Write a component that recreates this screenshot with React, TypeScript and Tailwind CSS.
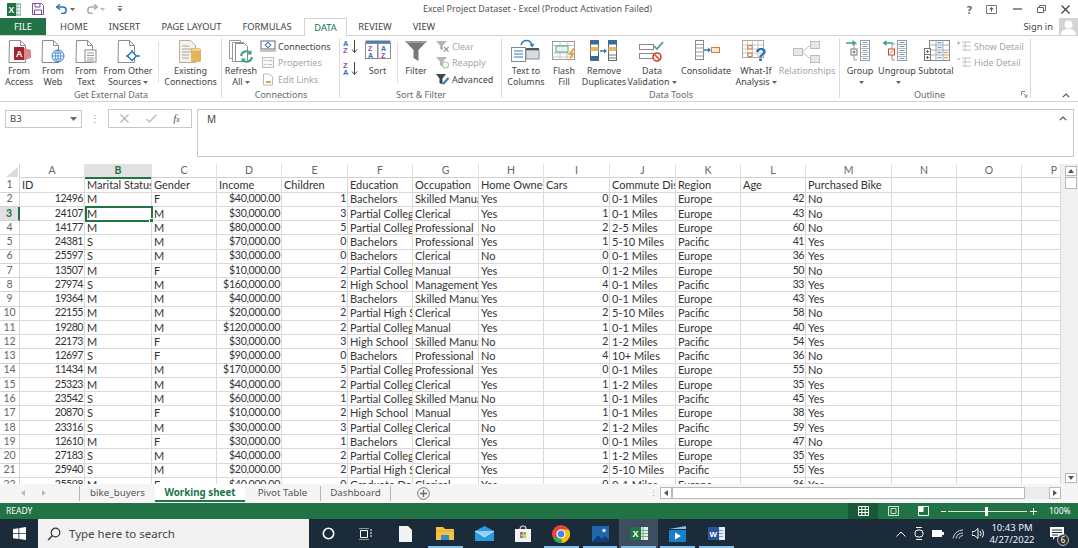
import React from "react";

const UI = "font-['Noto_Sans','Open_Sans',sans-serif]";

const rows: string[][] = [
  ["12496","M","F","$40,000.00","1","Bachelors","Skilled Manual","Yes","0","0-1 Miles","Europe","42","No"],
  ["24107","M","M","$30,000.00","3","Partial College","Clerical","Yes","1","0-1 Miles","Europe","43","No"],
  ["14177","M","M","$80,000.00","5","Partial College","Professional","No","2","2-5 Miles","Europe","60","No"],
  ["24381","S","M","$70,000.00","0","Bachelors","Professional","Yes","1","5-10 Miles","Pacific","41","Yes"],
  ["25597","S","M","$30,000.00","0","Bachelors","Clerical","No","0","0-1 Miles","Europe","36","Yes"],
  ["13507","M","F","$10,000.00","2","Partial College","Manual","Yes","0","1-2 Miles","Europe","50","No"],
  ["27974","S","M","$160,000.00","2","High School","Management","Yes","4","0-1 Miles","Pacific","33","Yes"],
  ["19364","M","M","$40,000.00","1","Bachelors","Skilled Manual","Yes","0","0-1 Miles","Europe","43","Yes"],
  ["22155","M","M","$20,000.00","2","Partial High School","Clerical","Yes","2","5-10 Miles","Pacific","58","No"],
  ["19280","M","M","$120,000.00","2","Partial College","Manual","Yes","1","0-1 Miles","Europe","40","Yes"],
  ["22173","M","F","$30,000.00","3","High School","Skilled Manual","No","2","1-2 Miles","Pacific","54","Yes"],
  ["12697","S","F","$90,000.00","0","Bachelors","Professional","No","4","10+ Miles","Pacific","36","No"],
  ["11434","M","M","$170,000.00","5","Partial College","Professional","Yes","0","0-1 Miles","Europe","55","No"],
  ["25323","M","M","$40,000.00","2","Partial College","Clerical","Yes","1","1-2 Miles","Europe","35","Yes"],
  ["23542","S","M","$60,000.00","1","Partial College","Skilled Manual","No","1","0-1 Miles","Pacific","45","Yes"],
  ["20870","S","F","$10,000.00","2","High School","Manual","Yes","1","0-1 Miles","Europe","38","Yes"],
  ["23316","S","M","$30,000.00","3","Partial College","Clerical","No","2","1-2 Miles","Pacific","59","Yes"],
  ["12610","M","F","$30,000.00","1","Bachelors","Clerical","Yes","0","0-1 Miles","Europe","47","No"],
  ["27183","S","M","$40,000.00","2","Partial College","Clerical","Yes","1","1-2 Miles","Europe","35","Yes"],
  ["25940","S","M","$20,000.00","2","Partial High School","Clerical","Yes","2","5-10 Miles","Pacific","55","Yes"],
  ["25598","M","F","$40,000.00","0","Graduate Degree","Clerical","Yes","0","0-1 Miles","Europe","36","Yes"],
];
const header = ["ID","Marital Status","Gender","Income","Children","Education","Occupation","Home Owner","Cars","Commute Distance","Region","Age","Purchased Bike"];
const cols = "ABCDEFGHIJKLMNOP".split("");
const rightCols = new Set([0,3,4,8,11]);
const GRID = "grid grid-cols-[20px_65px_67px_65px_65px_66px_65px_66px_65px_66px_66px_65px_65px_86px_65px_65px_39px]";

const Caret = ({ c = "#666" }: { c?: string }) => (
  <svg width="5" height="3" viewBox="0 0 5 3" className="inline-block ml-[2px] align-middle"><path d="M0 0h5L2.500 3z" fill={c} /></svg>
);

const Doc = ({ x = 0, c = "#8c8c8c" }: { x?: number; c?: string }) => (
  <path transform={`translate(${x} 0)`} d="M0.500 1.500h11l5 5v17h-16.500z M11.500 1.500v5h5" fill="#fff" stroke={c} />
);

const Icons: Record<string, React.ReactNode> = {
  access: (<svg width="30" height="25" viewBox="0 0 30 25"><Doc x={5} /><rect x="10" y="8" width="10" height="13" fill="#a4262c" /><path d="M20 9l7 2v8l-7 2z" fill="#d98a8c" /><text x="12" y="18" fontSize="9" fontWeight="700" fill="#fff" fontFamily="Liberation Sans">A</text></svg>),
  web: (<svg width="30" height="25" viewBox="0 0 30 25"><Doc x={4} /><circle cx="20" cy="17" r="6" fill="#fff" stroke="#3b7fc4" /><path d="M14 17h12M20 11v12M15.500 14h9M15.500 20h9" stroke="#3b7fc4" strokeWidth=".8" /><ellipse cx="20" cy="17" rx="2.800" ry="6" fill="none" stroke="#3b7fc4" strokeWidth=".8" /></svg>),
  text: (<svg width="30" height="25" viewBox="0 0 30 25"><Doc x={5} /><rect x="14" y="11" width="11" height="12" fill="#fff" stroke="#8c8c8c" /><path d="M16 14h7M16 16.500h7M16 19h7M16 21h7" stroke="#9a9a9a" /></svg>),
  other: (<svg width="30" height="25" viewBox="0 0 30 25"><Doc x={5} /><path d="M19 11v11M13 17h4M21 17h6" stroke="#2b79c2" strokeWidth="1.300" /><rect x="15.800" y="13.800" width="6.400" height="6.400" transform="rotate(45 19 17)" fill="#fff" stroke="#2b79c2" strokeWidth="1.500" /></svg>),
  existing: (<svg width="30" height="25" viewBox="0 0 30 25"><path d="M3.500 1.500h11l5 5v17h-16z" fill="#f6f2ea" stroke="#b5ad9d" /><path d="M6 7h7M6 10h11M6 13h11M6 16h7M6 19h7" stroke="#a8a8a8" /><rect x="15" y="11" width="10" height="12" rx="1.500" fill="#e3b45c" /><ellipse cx="20" cy="11" rx="5" ry="1.800" fill="#f0d28f" stroke="#c99a42" strokeWidth=".5" /></svg>),
  refresh: (<svg width="30" height="25" viewBox="0 0 30 25"><path d="M3.500 1.500h11v18h-11z" fill="#fff" stroke="#999" /><path d="M6.500 3.500h11v19h-11z" fill="#fff" stroke="#999" /><path d="M9.500 4.500h9l3 3v15h-12z" fill="#fff" stroke="#8c8c8c" /><path d="M15 17a5.500 5.500 0 0 1 9.500-3M26 18a5.500 5.500 0 0 1-9.500 3" fill="none" stroke="#3fa27a" strokeWidth="2" /><path d="M25.500 11v4.500h-4.500zM15.500 24v-4.500h4.500z" fill="#3fa27a" /></svg>),
  conn: (<svg width="16" height="13" viewBox="0 0 16 13"><rect x="1" y="1" width="14" height="8" fill="#fff" stroke="#666" /><rect x="6" y="3" width="4" height="4" transform="rotate(45 8 5)" fill="#fff" stroke="#2b79c2" /><path d="M0 11h16" stroke="#888" /></svg>),
  prop: (<svg width="14" height="13" viewBox="0 0 14 13"><rect x="1.500" y="1.500" width="11" height="10" fill="#f7f7f7" stroke="#bbb" /><path d="M3.500 4.500h2M7 4.500h4M3.500 8.500h2M7 8.500h4" stroke="#bbb" /></svg>),
  links: (<svg width="14" height="13" viewBox="0 0 14 13"><path d="M2.500 1h6l3 3v8h-9z" fill="#fff" stroke="#bbb" /><path d="M5 9h5" stroke="#d9a85f" strokeWidth="2" /></svg>),
  sortaz: (<svg width="16" height="15" viewBox="0 0 16 15"><text x="0" y="7" fontSize="7.500" fontWeight="700" fill="#2c73b8" fontFamily="Liberation Sans">A</text><text x="0" y="14" fontSize="7.500" fontWeight="700" fill="#8d4fb0" fontFamily="Liberation Sans">Z</text><path d="M11.500 1v12M9 10.500l2.500 3 2.500-3" stroke="#444" fill="none" /></svg>),
  sortza: (<svg width="16" height="15" viewBox="0 0 16 15"><text x="0" y="7" fontSize="7.500" fontWeight="700" fill="#8d4fb0" fontFamily="Liberation Sans">Z</text><text x="0" y="14" fontSize="7.500" fontWeight="700" fill="#2c73b8" fontFamily="Liberation Sans">A</text><path d="M11.500 1v12M9 10.500l2.500 3 2.500-3" stroke="#444" fill="none" /></svg>),
  sort: (<svg width="26" height="22" viewBox="0 0 26 22"><rect x=".5" y=".5" width="25" height="3" fill="#4f7fb5" /><rect x=".5" y="3.500" width="12" height="15" fill="#fff" stroke="#8a8a8a" /><rect x="13" y="3.500" width="12.500" height="15" fill="#fff" stroke="#8a8a8a" /><text x="3" y="11" fontSize="7" fontWeight="700" fill="#8d4fb0" fontFamily="Liberation Sans">Z</text><text x="3" y="18" fontSize="7" fontWeight="700" fill="#2c73b8" fontFamily="Liberation Sans">A</text><text x="16" y="11" fontSize="7" fontWeight="700" fill="#2c73b8" fontFamily="Liberation Sans">A</text><text x="16" y="18" fontSize="7" fontWeight="700" fill="#8d4fb0" fontFamily="Liberation Sans">Z</text></svg>),
  filter: (<svg width="24" height="22" viewBox="0 0 24 22"><path d="M1 1h22l-8.500 9v11l-5-3v-8z" fill="#777" /><path d="M1 1h22l-2 2H3z" fill="#9a9a9a" /></svg>),
  clear: (<svg width="15" height="13" viewBox="0 0 15 13"><path d="M1 1h11l-4 4.500v5l-3-1.500V5.500z" fill="#b5b5b5" /><path d="M9 7l4.500 4.500M13.500 7L9 11.500" stroke="#9a9a9a" strokeWidth="1.200" /></svg>),
  reapply: (<svg width="15" height="13" viewBox="0 0 15 13"><path d="M1 1h11l-4 4.500v5l-3-1.500V5.500z" fill="#b5b5b5" /><circle cx="10.500" cy="9" r="3" fill="none" stroke="#9cc7b3" strokeWidth="1.100" /></svg>),
  advanced: (<svg width="15" height="13" viewBox="0 0 15 13"><path d="M1 1h10l-3.500 4.500v6l-3-1.500V5.500z" fill="#444" /><path d="M8 11l5.500-6" stroke="#2b79c2" strokeWidth="2" /></svg>),
  t2c: (<svg width="30" height="25" viewBox="0 0 30 25"><path d="M10 6c2-6 9-6 11 0" fill="none" stroke="#2b79c2" strokeWidth="1.500" /><path d="M18.500 5.500l3 3 2-4z" fill="#2b79c2" /><rect x=".5" y="8.500" width="14" height="14" fill="#fff" stroke="#8a8a8a" /><path d="M3 12h9M3 15h9M3 18h9" stroke="#2b79c2" /><rect x="15" y="11" width="13" height="9" fill="#d5dce4" stroke="#8a8a8a" /><path d="M15 10h13" stroke="#555" strokeWidth="2" /></svg>),
  flash: (<svg width="30" height="25" viewBox="0 0 30 25"><rect x="3.500" y="2.500" width="22" height="18" fill="#fff" stroke="#9a9a9a" /><path d="M3.500 6.500h22M3.500 14h22M3.500 18h22M11 2.500v18M18 2.500v18" stroke="#c4c4c4" /><rect x="7" y="7" width="12" height="6" fill="#e9f3ec" stroke="#54a67f" /><path d="M24 9l-5 7h3l-3 7 7-9h-3l3-5z" fill="#e9a23b" /></svg>),
  dup: (<svg width="30" height="25" viewBox="0 0 30 25"><rect x="1.500" y="1.500" width="8" height="20" fill="#fff" stroke="#666" /><rect x="1.500" y="1.500" width="8" height="4" fill="#2f6cac" /><rect x="1.500" y="8" width="8" height="4" fill="#e8b85f" /><rect x="1.500" y="17" width="8" height="4" fill="#2f6cac" /><rect x="19.500" y="1.500" width="8" height="20" fill="#fff" stroke="#666" /><rect x="19.500" y="1.500" width="8" height="4" fill="#2f6cac" /><rect x="19.500" y="8" width="8" height="4" fill="#e8b85f" /><path d="M19.500 16h8M19.500 19h8" stroke="#777" /><path d="M11 12h5" stroke="#2b79c2" strokeWidth="1.500" /><path d="M15 9.500l3 2.500-3 2.500z" fill="#2b79c2" /></svg>),
  dv: (<svg width="30" height="25" viewBox="0 0 30 25"><rect x="2.500" y="5.500" width="14" height="5" fill="#fff" stroke="#8a8a8a" /><rect x="2.500" y="14.500" width="14" height="5" fill="#fff" stroke="#8a8a8a" /><path d="M17 7l3 3 6-7" fill="none" stroke="#3fa27a" strokeWidth="1.700" /><circle cx="20" cy="18" r="4" fill="#fff" stroke="#d24726" strokeWidth="1.600" /><path d="M17.500 15.500l5 5" stroke="#d24726" strokeWidth="1.500" /></svg>),
  cons: (<svg width="30" height="25" viewBox="0 0 30 25"><rect x="4.500" y="1.500" width="8" height="19" fill="#fff" stroke="#8a8a8a" /><path d="M4.500 5.500h8M4.500 9h8M4.500 13h8M4.500 17h8" stroke="#9a9a9a" /><path d="M13 11h5" stroke="#2b79c2" strokeWidth="1.500" /><path d="M17 8.500l3 2.500-3 2.500z" fill="#2b79c2" /><rect x="20.500" y="8.500" width="8" height="5" fill="#fbe5d6" stroke="#e0783c" /></svg>),
  whatif: (<svg width="30" height="25" viewBox="0 0 30 25"><rect x="1.500" y="1.500" width="21" height="17" fill="#fff" stroke="#a8a8a8" /><path d="M1.500 6h21M1.500 10h21M1.500 14h21M6.500 1.500v17M11.500 1.500v17M17 1.500v17" stroke="#c8c8c8" /><rect x="7" y="6.500" width="4" height="3.500" fill="none" stroke="#e0783c" /><rect x="7" y="14" width="4" height="3.500" fill="none" stroke="#e0783c" /><text x="14" y="22" fontSize="19" fontWeight="700" fill="#2b6fb5" fontFamily="Liberation Sans">?</text></svg>),
  rel: (<svg width="30" height="25" viewBox="0 0 30 25"><rect x="1.500" y="9.500" width="9" height="7" fill="#e8e8e8" stroke="#bdbdbd" /><rect x="18.500" y="2.500" width="9" height="7" fill="#e8e8e8" stroke="#bdbdbd" /><rect x="18.500" y="16.500" width="9" height="7" fill="#e8e8e8" stroke="#bdbdbd" /><path d="M10.500 13l8-7M10.500 13l8 7" stroke="#bdbdbd" /></svg>),
  group: (<svg width="30" height="25" viewBox="0 0 30 25"><path d="M1 4h8" stroke="#3fa27a" strokeWidth="1.500" /><path d="M7.500 1l4 3-4 3z" fill="#3fa27a" /><path d="M12 5h-3v16h3" fill="none" stroke="#999" /><rect x="6" y="10" width="6" height="6" fill="#fff" stroke="#777" /><path d="M7.500 13h3M9 11.500v3" stroke="#666" /><rect x="15.500" y="1.500" width="9" height="20" fill="#fff" stroke="#999" /><path d="M15.500 5.500h9M15.500 9.500h9M15.500 13.500h9M15.500 17.500h9" stroke="#b5b5b5" /><path d="M17.500 3.500h5M17.500 7.500h5M17.500 11.500h5M17.500 15.500h5M17.500 19.500h5" stroke="#6aa0d3" strokeWidth="1.200" /></svg>),
  ungroup: (<svg width="30" height="25" viewBox="0 0 30 25"><path d="M3 4h8" stroke="#3fa27a" strokeWidth="1.500" /><path d="M4.500 1l-4 3 4 3z" fill="#3fa27a" /><path d="M13 5h-3v16h3" fill="none" stroke="#999" /><rect x="6.500" y="10" width="6" height="6" fill="#fff" stroke="#d24726" /><path d="M8 14.500l3-3" stroke="#d24726" /><rect x="15.500" y="1.500" width="9" height="20" fill="#fff" stroke="#999" /><path d="M15.500 5.500h9M15.500 9.500h9M15.500 13.500h9M15.500 17.500h9" stroke="#b5b5b5" /><path d="M17.500 3.500h5M17.500 7.500h5M17.500 11.500h5M17.500 15.500h5M17.500 19.500h5" stroke="#6aa0d3" strokeWidth="1.200" /></svg>),
  subtotal: (<svg width="30" height="25" viewBox="0 0 30 25"><rect x="8.500" y="1.500" width="20" height="20" fill="#fff" stroke="#888" /><path d="M8.500 6h20M8.500 11h20M8.500 16h20M15 1.500v20M22 1.500v20" stroke="#aaa" /><path d="M16.500 3.700h4M16.500 8.500h4M16.500 13.500h4M16.500 18.700h4" stroke="#6aa0d3" strokeWidth="1.300" /><path d="M23 13.500h4M23 18.700h4" stroke="#e8a45c" strokeWidth="1.300" /><rect x="3.500" y="9.500" width="6" height="6" fill="#fff" stroke="#777" /><path d="M5 12.500h3M6.500 11v3" stroke="#666" /><rect x="3.500" y="15.500" width="6" height="6" fill="#fff" stroke="#777" /><path d="M5 18.500h3M6.500 17v3" stroke="#666" /></svg>),
  show: (<svg width="16" height="13" viewBox="0 0 16 13"><path d="M1 3h3M2.500 1.500v3" stroke="#aaa" /><path d="M6 2h9M6 6h9M6 10h9M9 2v9" stroke="#c2c2c2" /></svg>),
  hide: (<svg width="16" height="13" viewBox="0 0 16 13"><path d="M1 3h3" stroke="#aaa" /><path d="M6 2h9M6 6h9M6 10h9M9 2v9" stroke="#c2c2c2" /></svg>),
};

function Big({ w, icon, l1, l2, caret, caretOnly, dim }: { w: string; icon: string; l1: string; l2?: string; caret?: boolean; caretOnly?: boolean; dim?: boolean }) {
  return (
    <div className={`${w} flex flex-col items-center shrink-0 ${dim ? "text-[#a6a6a6]" : "text-[#444]"}`}>
      <div className="h-[27px] flex items-center justify-center pt-[1px]">{Icons[icon]}</div>
      <div className="h-[11px] leading-[11px] whitespace-nowrap mt-[1px]">{l1}</div>
      <div className="h-[11px] leading-[11px] whitespace-nowrap">
        {l2}{caret && <Caret />}{caretOnly && <Caret />}
      </div>
    </div>
  );
}

function Small({ icon, label, dim }: { icon: string; label: string; dim?: boolean }) {
  return (
    <div className={`h-[16.500px] flex items-center gap-[2px] whitespace-nowrap ${dim ? "text-[#a6a6a6]" : "text-[#444]"}`}>
      <span className="w-[16px] flex justify-center">{Icons[icon]}</span>
      <span>{label}</span>
    </div>
  );
}

function Group({ w, label, children, launcher, pr }: { w: string; label: string; children: React.ReactNode; launcher?: boolean; pr?: string }) {
  return (
    <div className={`${w} shrink-0 flex flex-col relative`}>
      <div className="h-[53px] flex pt-[1px]">{children}</div>
      <div className={`h-[11px] leading-[11px] text-center text-[#6a6a6a] ${pr ?? ""}`}>{label}</div>
      <div className="absolute right-0 top-[2px] bottom-[3px] w-px bg-[#dcdcdc]" />
      {launcher && (
        <svg className="absolute right-[3px] bottom-[3px]" width="7" height="7" viewBox="0 0 7 7"><path d="M.5 .5h4M.5 .5v4" stroke="#888" /><path d="M2.500 2.500l3.500 3.500M6 3.500V6H3.500" stroke="#888" fill="none" /></svg>
      )}
    </div>
  );
}

const VSep = () => <div className="w-px h-[41px] mt-[5px] bg-[#dfdfdf] shrink-0" />;

function Tab({ w, label }: { w: string; label: string }) {
  return <div className={`${w} h-[17px] leading-[17px] text-center text-[#444] shrink-0`}>{label}</div>;
}

const Chevron = () => (
  <svg width="8" height="5" viewBox="0 0 8 5"><path d="M.8 4.200L4 1l3.200 3.200" fill="none" stroke="#555" strokeWidth="1.200" /></svg>
);

function Sheet() {
  return (
    <div className="flex-1 overflow-hidden font-['Lato','Liberation_Sans',sans-serif] text-[11px] text-[#333] relative">
      <div className={`${GRID} h-[14px] text-[#666] text-[10.500px] border-b border-[#d0d0d0]`}>
        <div className="relative bg-white border-r border-[#d4d4d4]">
          <svg className="absolute right-[1px] bottom-[1px]" width="12" height="10" viewBox="0 0 12 10"><path d="M12 0v10H0z" fill="#dcdcdc" /></svg>
        </div>
        {cols.map((c, i) => (
          <div key={c} className={`leading-[13px] border-r border-[#e2e2e2] ${i === 15 ? "text-right pr-[3px]" : "text-center"} ${c === "B" ? "bg-[#e1e1e1] text-[#217346] font-bold border-b-2 border-b-[#217346] -mb-[1px]" : ""}`}>{c}</div>
        ))}
      </div>
      {[header, ...rows].map((r, ri) => (
        <div key={ri} className={`${GRID} h-[14.275px]`}>
          <div className={`text-center text-[10.500px] leading-[13.500px] border-r border-b border-[#d4d4d4] text-[#666] ${ri === 2 ? "bg-[#e1e1e1] text-[#217346] font-bold border-r-2 border-r-[#217346]" : ""}`}>{ri + 1}</div>
          {Array.from({ length: 16 }).map((_, ci) => {
            const v = r[ci] ?? "";
            const right = ri > 0 && rightCols.has(ci);
            const money = right && ci === 3;
            return (
              <div key={ci} className={`relative overflow-hidden whitespace-nowrap leading-[13.500px] border-r border-b border-[#d9d9d9] ${right ? "text-right pr-[1px] text-[10.600px]" : "pl-[2px]"} ${right ? (money ? "tracking-[-0.3px]" : "tracking-[-0.5px]") : ""}`}>{v}</div>
            );
          })}
        </div>
      ))}
      <div className="absolute left-[85px] top-[42px] w-[67.500px] h-[15.500px] border-2 border-[#217346]">
        <div className="absolute -right-[3px] -bottom-[3px] w-[5px] h-[5px] bg-[#217346] border border-white" />
      </div>
    </div>
  );
}

function VScroll() {
  return (
    <div className="w-[17px] bg-[#f0f0f0] flex flex-col items-center pt-[2px] pl-[2px]">
      <div className="w-[12px] h-[10px] bg-white border border-[#b8b8b8] flex items-center justify-center">
        <svg width="6" height="4" viewBox="0 0 6 4"><path d="M0 4h6L3 0z" fill="#555" /></svg>
      </div>
      <div className="w-[12px] h-[12px] bg-white border border-[#b8b8b8] mt-[1px]" />
      <div className="flex-1" />
      <div className="w-[12px] h-[10px] bg-white border border-[#b8b8b8] flex items-center justify-center mb-[1px]">
        <svg width="6" height="4" viewBox="0 0 6 4"><path d="M0 0h6L3 4z" fill="#555" /></svg>
      </div>
    </div>
  );
}

function SheetTabs() {
  const Sep = () => <div className="w-px h-[15px] bg-[#b5b5b5] shrink-0" />;
  return (
    <div className={`${UI} h-[19px] bg-[#f5f5f5] flex items-center pb-[1px] text-[9.800px] text-[#555] shrink-0`}>
      <div className="w-[79px] flex items-center pl-[21px] gap-[17px] shrink-0">
        <svg width="4" height="6" viewBox="0 0 4 6"><path d="M4 0v6L0 3z" fill="#bbb" /></svg>
        <svg width="4" height="6" viewBox="0 0 4 6"><path d="M0 0v6l4-3z" fill="#bbb" /></svg>
      </div>
      <Sep />
      <div className="w-[75px] text-center shrink-0">bike_buyers</div>
      <div className="w-[90px] h-[18px] leading-[17px] self-start text-center font-bold text-[#217346] bg-white border-b-2 border-[#217346] shrink-0">Working sheet</div>
      <div className="w-[75px] text-center shrink-0">Pivot Table</div>
      <Sep />
      <div className="w-[69px] text-center shrink-0">Dashboard</div>
      <Sep />
      <div className="w-[65px] flex justify-center shrink-0">
        <svg width="13" height="13" viewBox="0 0 13 13"><circle cx="6.500" cy="6.500" r="5.800" fill="none" stroke="#777" /><path d="M6.500 3v7M3 6.500h7" stroke="#666" strokeWidth="1.300" /></svg>
      </div>
      <div className="w-[191px] shrink-0" />
      <div className="w-[13px] text-center text-[#999] leading-[8px] shrink-0 text-[7px]">⋮</div>
      <div className="w-[12px] h-[12px] bg-white border border-[#b8b8b8] flex items-center justify-center shrink-0">
        <svg width="4" height="6" viewBox="0 0 4 6"><path d="M4 0v6L0 3z" fill="#555" /></svg>
      </div>
      <div className="w-[353px] h-[12px] bg-white border border-[#b8b8b8] shrink-0" />
      <div className="w-[24px] h-[12px] bg-[#ececec] shrink-0" />
      <div className="w-[12px] h-[12px] bg-white border border-[#b8b8b8] flex items-center justify-center shrink-0">
        <svg width="4" height="6" viewBox="0 0 4 6"><path d="M0 0v6l4-3z" fill="#555" /></svg>
      </div>
    </div>
  );
}

function StatusBar() {
  return (
    <div className={`${UI} h-[16px] bg-[#217346] flex items-center text-white text-[8.500px] shrink-0`}>
      <div className="pl-[6px] w-[848px] shrink-0">READY</div>
      <div className="w-[30px] h-[16px] bg-[#175a35] flex items-center justify-center shrink-0">
        <svg width="11" height="10" viewBox="0 0 11 10"><path d="M.5 .5h10v9H.5zM.5 3.500h10M.5 6.500h10M3.800 .5v9M7.200 .5v9" fill="none" stroke="#fff" /></svg>
      </div>
      <div className="w-[30px] flex justify-center shrink-0">
        <svg width="11" height="10" viewBox="0 0 11 10"><path d="M.5 .5h10v9H.5z" fill="none" stroke="#cfe3d8" /><path d="M3 2.500h5v5H3z" fill="none" stroke="#cfe3d8" /></svg>
      </div>
      <div className="w-[30px] flex justify-center shrink-0">
        <svg width="11" height="10" viewBox="0 0 11 10"><path d="M.5 .5h10v9H.5z" fill="none" stroke="#fff" /><path d="M1 1h4.500v5H1z" fill="#fff" /></svg>
      </div>
      <div className="w-[3px] shrink-0" />
      <div className="w-[97px] flex items-center shrink-0 gap-[2px]">
        <div className="w-[5px] h-px bg-white shrink-0" />
        <div className="relative w-[79px] h-px bg-[#d6e6dc] shrink-0">
          <div className="absolute left-[37px] -top-[4px] w-[3px] h-[9px] bg-white" />
        </div>
        <svg width="7" height="7" viewBox="0 0 7 7" className="ml-[1px] shrink-0"><path d="M3.500 0v7M0 3.500h7" stroke="#fff" /></svg>
      </div>
      <div className="text-[8.500px] ml-[11px]">100%</div>
    </div>
  );
}

function TaskIcon({ w = "w-[38.700px]", active, bar, children }: { w?: string; active?: boolean; bar?: boolean; children: React.ReactNode }) {
  return (
    <div className={`${w} h-[29px] relative flex items-center justify-center shrink-0 ${active ? "bg-[#3d4f5f]" : ""}`}>
      {children}
      {bar && <div className="absolute bottom-0 left-[2px] right-[2px] h-[2px] bg-[#7fc2ee]" />}
    </div>
  );
}

function Taskbar() {
  return (
    <div className={`${UI} flex-1 bg-[#1b2b3a] flex items-center text-white`}>
      <div className="w-[38px] flex justify-center shrink-0">
        <svg width="13" height="13" viewBox="0 0 13 13"><path d="M0 2l5.500-.8v5H0zM6.300 1.100L13 0v6.200H6.300zM0 7h5.500v5L0 11.200zM6.300 7H13v6l-6.700-1z" fill="#fff" /></svg>
      </div>
      <div className="w-[271px] h-[29px] bg-[#f2f2f2] flex items-center text-[#444] text-[11.500px] shrink-0">
        <svg className="ml-[9px] mr-[8px]" width="14" height="14" viewBox="0 0 14 14"><circle cx="8.500" cy="5.500" r="4.300" fill="none" stroke="#333" strokeWidth="1.200" /><path d="M5.500 8.500L1 13" stroke="#333" strokeWidth="1.500" /></svg>
        Type here to search
      </div>
      <TaskIcon w="w-[38px]"><svg width="13" height="13" viewBox="0 0 13 13"><circle cx="6.500" cy="6.500" r="5.200" fill="none" stroke="#fff" strokeWidth="1.600" /></svg></TaskIcon>
      <TaskIcon w="w-[37px]"><svg width="13" height="12" viewBox="0 0 13 12"><path d="M1.500 2.500h7v7h-7z" fill="none" stroke="#fff" /><path d="M0 0h10M0 12h10M11 2h2M11 5h2M11 8h2" stroke="#fff" /></svg></TaskIcon>
      <TaskIcon w="w-[42px]"><svg width="13" height="16" viewBox="0 0 13 16"><path d="M0 0h9l4 4v12H0z" fill="#f3f3f3" /></svg></TaskIcon>
      <TaskIcon bar><svg width="18" height="15" viewBox="0 0 18 15"><path d="M0 1h7l2 2h9v11H0z" fill="#f5c242" /><path d="M0 5h18" stroke="#e8a92f" /><rect x="5" y="9" width="8" height="5" fill="#2d8fd5" /></svg></TaskIcon>
      <TaskIcon><svg width="19" height="15" viewBox="0 0 19 15"><path d="M0 5L9.500 0 19 5v10H0z" fill="#2b9be0" /><path d="M0 5l9.500 6L19 5" fill="#8fd2f7" stroke="#fff" strokeWidth=".6" /></svg></TaskIcon>
      <TaskIcon><svg width="16" height="17" viewBox="0 0 16 17"><path d="M5 4a3 3 0 0 1 6 0" fill="none" stroke="#e8e8e8" strokeWidth="1.200" /><rect x="0" y="4" width="16" height="13" fill="#f3f3f3" /><rect x="5" y="7" width="2.800" height="2.800" fill="#e8553b" /><rect x="8.300" y="7" width="2.800" height="2.800" fill="#7fba3a" /><rect x="5" y="10.300" width="2.800" height="2.800" fill="#2b9be0" /><rect x="8.300" y="10.300" width="2.800" height="2.800" fill="#f5b928" /></svg></TaskIcon>
      <TaskIcon bar><svg width="18" height="18" viewBox="0 0 18 18"><circle cx="9" cy="9" r="9" fill="#e8453c" /><path d="M9 9L1.200 13.500A9 9 0 0 0 10 18z" fill="#34a853" /><path d="M9 9v-4.500h7.800A9 9 0 0 1 10 18z" fill="#fbbc05" /><circle cx="9" cy="9" r="4" fill="#4285f4" stroke="#fff" strokeWidth="1.200" /></svg></TaskIcon>
      <TaskIcon bar><svg width="17" height="16" viewBox="0 0 17 16"><rect width="17" height="16" fill="#1f66ad" /><path d="M0 16l6-7 4 4 3-3 4 4v2z" fill="#0f3f78" /><circle cx="12" cy="4.500" r="1.800" fill="#cfe6f7" /></svg></TaskIcon>
      <TaskIcon active bar><svg width="18" height="15" viewBox="0 0 18 15"><rect x="9" y="1" width="9" height="13" fill="#e4efe8" /><path d="M9 4.500h9M9 7.500h9M9 10.500h9M13 1v13" stroke="#6fae8d" /><rect y="1" width="11" height="13" fill="#217346" /><text x="2.500" y="11" fontSize="9" fontWeight="700" fill="#fff" fontFamily="Liberation Sans">X</text></svg></TaskIcon>
      <TaskIcon bar><svg width="19" height="17" viewBox="0 0 19 17"><path d="M1 4l17-3v3z" fill="#7cc5f2" /><rect x="1" y="5" width="17" height="12" fill="#1680c9" /><path d="M7 7.500v7l6-3.500z" fill="#fff" /></svg></TaskIcon>
      <TaskIcon bar><svg width="17" height="15" viewBox="0 0 17 15"><rect x="8" y="1" width="9" height="13" fill="#e6edf7" /><path d="M10 4.500h5M10 7.500h5M10 10.500h5" stroke="#7c9fd3" /><rect y="1" width="11" height="13" fill="#2b579a" /><text x="1.500" y="10.500" fontSize="8" fontWeight="700" fill="#fff" fontFamily="Liberation Sans">W</text></svg></TaskIcon>
      <div className="flex-1" />
      <div className="flex items-center gap-[8px] mr-[3px]">
        <svg width="10" height="6" viewBox="0 0 10 6"><path d="M.5 5.500L5 1l4.500 4.500" fill="none" stroke="#fff" /></svg>
        <svg width="10" height="13" viewBox="0 0 10 13"><rect x="1" y="3" width="8" height="7" rx="3" fill="none" stroke="#fff" /><path d="M2 .5h6M2 12.500h6" stroke="#fff" /></svg>
        <svg width="12" height="9" viewBox="0 0 12 9"><rect x="0" y="1" width="10" height="7" fill="#fff" /><rect x="10" y="3" width="2" height="3" fill="#fff" /></svg>
        <svg width="12" height="10" viewBox="0 0 12 10"><path d="M1 9.500A10 10 0 0 1 11 1M4 9.500A7 7 0 0 1 11 4M7 9.500A4 4 0 0 1 11 6.500" fill="none" stroke="#cfd4d9" /></svg>
        <svg width="12" height="11" viewBox="0 0 12 11"><path d="M0 3.500h2.500L6 .5v10L2.500 7.500H0z" fill="none" stroke="#fff" /><path d="M8 3a3.500 3.500 0 0 1 0 5M10 1.500a6 6 0 0 1 0 8" fill="none" stroke="#fff" /></svg>
      </div>
      <div className="w-[50px] text-center text-[9.500px] leading-[12px] shrink-0 text-[#eef]">
        <div>10:43 PM</div>
        <div>4/27/2022</div>
      </div>
      <div className="w-[39px] h-[28px] flex items-center justify-center relative shrink-0 mr-[2px]">
        <svg width="14" height="13" viewBox="0 0 14 13"><path d="M0 0h14v10H5l-2 3v-3H0z" fill="#fff" /><path d="M2 3h10M2 5.500h10M2 8h6" stroke="#1b2b3a" /></svg>
        <div className="absolute right-[7px] bottom-[2px] w-[12px] h-[12px] rounded-full bg-[#333] border border-[#bbb] text-[8px] leading-[10px] text-center">6</div>
      </div>
    </div>
  );
}

export default function App() {
  return (
    <div className="w-[1078px] h-[548px] overflow-hidden bg-white flex flex-col">
      {/* Title bar */}
      <div className={`${UI} h-[18px] flex items-center text-[9px] text-[#555] shrink-0`}>
        <div className="w-[200px] flex items-center pl-[7px] shrink-0">
          <svg width="14" height="13" viewBox="0 0 14 13"><rect x="6" y="1" width="8" height="11" fill="#e7f1eb" stroke="#217346" strokeWidth=".7" /><path d="M10 1v11M6 4.500h8M6 8h8" stroke="#7fb59a" strokeWidth=".7" /><rect y="0" width="9" height="13" fill="#217346" /><text x="1.500" y="10" fontSize="8.500" fontWeight="700" fill="#fff" fontFamily="Liberation Sans">X</text></svg>
          <svg className="ml-[11px]" width="12" height="12" viewBox="0 0 12 12"><path d="M.5 .5h9l2 2v9H.5z" fill="#fff" stroke="#7b4ea3" /><path d="M3 .5v3.500h5V.5M2.500 11.500V7h7v4.500" fill="none" stroke="#7b4ea3" /></svg>
          <svg className="ml-[12px]" width="12" height="10" viewBox="0 0 12 10"><path d="M2 3h5.500a3.300 3.300 0 0 1 0 6.500H5" fill="none" stroke="#2a6db5" strokeWidth="1.500" /><path d="M4 .5L.5 3 4 5.500" fill="none" stroke="#2a6db5" strokeWidth="1.500" /></svg>
          <Caret c="#666" />
          <svg className="ml-[11px]" width="12" height="10" viewBox="0 0 12 10"><path d="M10 3H4.500a3.300 3.300 0 0 0 0 6.500H7" fill="none" stroke="#a8a8a8" strokeWidth="1.500" /><path d="M8 .5L11.500 3 8 5.500" fill="none" stroke="#a8a8a8" strokeWidth="1.500" /></svg>
          <Caret c="#bbb" />
          <svg className="ml-[12px]" width="6" height="6" viewBox="0 0 6 6"><path d="M1 .5h4" stroke="#666" /><path d="M.5 2.500h5L3 5.500z" fill="#666" /></svg>
        </div>
        <div className="flex-1 text-center pr-[3px] whitespace-nowrap text-[#555]">Excel Project Dataset - Excel (Product Activation Failed)</div>
        <div className="w-[200px] flex items-center justify-end gap-[12px] pr-[8px] shrink-0">
          <span className="font-bold text-[11px] leading-none text-[#666]">?</span>
          <svg className="ml-[2px]" width="11" height="9" viewBox="0 0 11 9"><path d="M.5 .5h10v8H.5z" fill="none" stroke="#777" /><path d="M5.500 2.500v4M3.500 4.500l2-2 2 2" fill="none" stroke="#555" /></svg>
          <svg className="ml-[4px]" width="9" height="2" viewBox="0 0 9 2"><path d="M0 1h9" stroke="#555" strokeWidth="1.300" /></svg>
          <svg className="ml-[3px]" width="9" height="8" viewBox="0 0 9 8"><path d="M.5 2.500h6v5h-6zM2.500 2.500v-2h6v5h-2" fill="none" stroke="#666" /></svg>
          <svg className="ml-[3px]" width="9" height="9" viewBox="0 0 9 9"><path d="M.5 .5l8 8M8.500 .5l-8 8" stroke="#444" strokeWidth="1.300" /></svg>
        </div>
      </div>

      {/* Tabs */}
      <div className={`${UI} h-[17px] flex text-[9.300px] relative shrink-0 border-b border-[#d4d4d4] box-content`}>
        <div className="w-[46px] h-[17px] bg-[#217346] text-white text-center leading-[17px] shrink-0">FILE</div>
        <Tab w="w-[56px]" label="HOME" />
        <Tab w="w-[45px]" label="INSERT" />
        <Tab w="w-[89px]" label="PAGE LAYOUT" />
        <Tab w="w-[62px]" label="FORMULAS" />
        <div className="w-[6px] shrink-0" />
        <div className="w-[43px] h-[18px] leading-[17px] text-center text-[#217346] bg-white border border-b-0 border-[#d4d4d4] shrink-0 z-10">DATA</div>
        <Tab w="w-[56px]" label="REVIEW" />
        <Tab w="w-[42px]" label="VIEW" />
        <div className="flex-1" />
        <div className="leading-[17px] text-[#444] mr-[6px]">Sign in</div>
        <div className="w-[19px] h-[17px] bg-[#d4d4d4] overflow-hidden flex justify-center relative">
          <svg width="19" height="17" viewBox="0 0 19 17"><circle cx="9.500" cy="6.500" r="4" fill="#fff" /><path d="M2 17c0-4 3-6 7.500-6s7.500 2 7.500 6z" fill="#fff" /></svg>
        </div>
      </div>

      {/* Ribbon */}
      <div className={`${UI} h-[65px] flex text-[9px] border-b border-[#d4d4d4] box-content shrink-0`}>
        <Group w="w-[222px]" label="Get External Data">
          <Big w="w-[38px]" icon="access" l1="From" l2="Access" />
          <Big w="w-[30px]" icon="web" l1="From" l2="Web" />
          <Big w="w-[36px]" icon="text" l1="From" l2="Text" />
          <Big w="w-[48px]" icon="other" l1="From Other" l2="Sources" caret />
          <div className="w-[6px] shrink-0" />
          <VSep />
          <Big w="w-[63px]" icon="existing" l1="Existing" l2="Connections" />
        </Group>
        <Group w="w-[118px]" label="Connections">
          <Big w="w-[38px]" icon="refresh" l1="Refresh" l2="All" caret />
          <div className="flex flex-col mt-[1px]">
            <Small icon="conn" label="Connections" />
            <Small icon="prop" label="Properties" dim />
            <Small icon="links" label="Edit Links" dim />
          </div>
        </Group>
        <Group w="w-[162px]" label="Sort & Filter">
          <div className="w-[22px] flex flex-col items-center gap-[7px] pt-[2px] shrink-0">
            {Icons.sortaz}
            {Icons.sortza}
          </div>
          <Big w="w-[31px]" icon="sort" l1="Sort" />
          <div className="w-[4px] shrink-0" />
          <VSep />
          <Big w="w-[36px]" icon="filter" l1="Filter" />
          <div className="flex flex-col mt-[1px]">
            <Small icon="clear" label="Clear" dim />
            <Small icon="reapply" label="Reapply" dim />
            <Small icon="advanced" label="Advanced" />
          </div>
        </Group>
        <Group w="w-[338px]" label="Data Tools">
          <div className="w-[4px] shrink-0" />
          <Big w="w-[40px]" icon="t2c" l1="Text to" l2="Columns" />
          <Big w="w-[36px]" icon="flash" l1="Flash" l2="Fill" />
          <Big w="w-[44px]" icon="dup" l1="Remove" l2="Duplicates" />
          <Big w="w-[52px]" icon="dv" l1="Data" l2="Validation" caret />
          <Big w="w-[56px]" icon="cons" l1="Consolidate" />
          <Big w="w-[44px]" icon="whatif" l1="What-If" l2="Analysis" caret />
          <Big w="w-[58px]" icon="rel" l1="Relationships" dim />
        </Group>
        <Group w="w-[191px]" label="Outline" launcher pr="pr-[12px]">
          <div className="w-[2px] shrink-0" />
          <Big w="w-[36px]" icon="group" l1="Group" caretOnly />
          <Big w="w-[38px]" icon="ungroup" l1="Ungroup" caretOnly />
          <Big w="w-[40px]" icon="subtotal" l1="Subtotal" />
          <div className="flex flex-col mt-[1px]">
            <Small icon="show" label="Show Detail" dim />
            <Small icon="hide" label="Hide Detail" dim />
          </div>
        </Group>
        <div className="flex-1 flex items-end justify-end pb-[3px] pr-[8px]"><Chevron /></div>
      </div>

      {/* Formula bar */}
      <div className={`${UI} h-[48px] mt-[7px] flex items-start text-[9.500px] text-[#444] shrink-0`}>
        <div className="ml-[5px] w-[77px] h-[18px] mt-[1px] border border-[#c8c8c8] flex items-center justify-between px-[4px] shrink-0">
          <span>B3</span>
          <svg width="7" height="4" viewBox="0 0 7 4"><path d="M0 0h7L3.500 4z" fill="#666" /></svg>
        </div>
        <div className="w-[26px] text-center leading-[18px] text-[#999] shrink-0 mt-[1px]">⋮</div>
        <div className="w-[84px] h-[19px] border border-[#c8c8c8] flex items-center justify-around px-[3px] shrink-0">
          <svg width="9" height="9" viewBox="0 0 9 9"><path d="M.5 .5l8 8M8.500 .5l-8 8" stroke="#b5b5b5" strokeWidth="1.200" /></svg>
          <svg width="11" height="9" viewBox="0 0 11 9"><path d="M.5 5l3 3 7-7.500" fill="none" stroke="#b5b5b5" strokeWidth="1.200" /></svg>
          <span className="font-['Liberation_Serif',serif] italic text-[11px] leading-none text-[#555]">f<span className="text-[8px]">x</span></span>
        </div>
        <div className="w-[5px] shrink-0" />
        <div className="w-[877px] h-[48px] border border-[#c8c8c8] flex items-start justify-between pl-[9px] pr-[6px] pt-[2px] shrink-0">
          <span className="text-[10px]">M</span>
          <div className="pt-[4px]"><Chevron /></div>
        </div>
      </div>

      {/* Sheet */}
      <div className="h-[320px] mt-[7px] flex shrink-0">
        <Sheet />
        <VScroll />
      </div>

      <SheetTabs />
      <StatusBar />
      <Taskbar />
    </div>
  );
}
